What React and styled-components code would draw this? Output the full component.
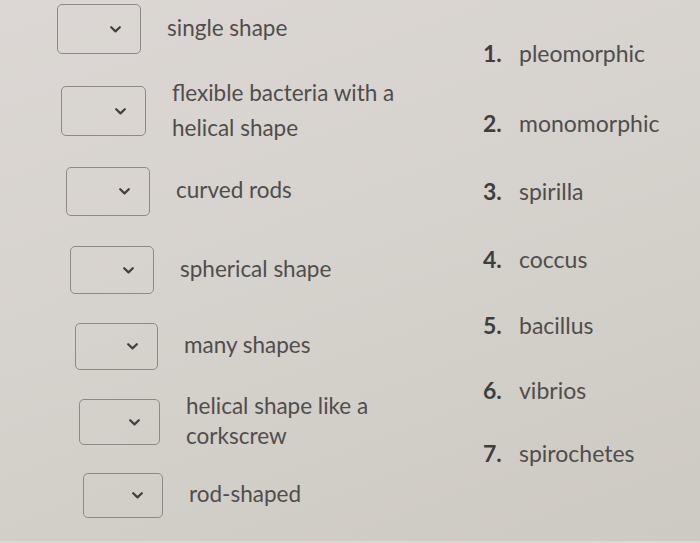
import React from 'react'
import styled, { createGlobalStyle } from 'styled-components'

const GlobalStyle = createGlobalStyle`
  html, body {
    margin: 0;
    padding: 0;
  }
  body {
    font-family: Lato, "Open Sans", sans-serif;
  }
`

const Page = styled.div`
  width: 700px;
  height: 543px;
  overflow: hidden;
  display: grid;
  grid-template-columns: 483px 1fr;
  background: linear-gradient(160deg, #dcd7d4 0%, #d6d2cd 45%, #cdcac2 100%);
  border-bottom: 2px solid #dad8d1;
  box-sizing: border-box;
`

const LeftCol = styled.div`
  display: flex;
  flex-direction: column;
`

const Row = styled.div`
  display: flex;
  align-items: center;
  height: ${(p) => p.h}px;
  margin-top: ${(p) => p.top}px;
  padding-left: ${(p) => p.left}px;
`

const SelectBox = styled.div`
  flex: none;
  width: ${(p) => p.w}px;
  height: ${(p) => p.h}px;
  box-sizing: border-box;
  border: 1.5px solid #8d8986;
  border-radius: 5px;
  display: flex;
  align-items: center;
  justify-content: flex-end;
  padding-right: 19px;
  color: #434140;
`

const Label = styled.div`
  margin-left: 26px;
  margin-top: -3px;
  font-size: 22.5px;
  line-height: ${(p) => p.lh || 30}px;
  color: #504d4b;
  white-space: pre-line;
`

const Options = styled.ol`
  list-style: none;
  margin: 0;
  padding: 0;
  display: flex;
  flex-direction: column;
`

const Option = styled.li`
  display: flex;
  align-items: center;
  height: 28px;
  margin-top: ${(p) => p.top}px;
  font-size: 23px;
  color: #504d4b;
`

const Num = styled.span`
  width: 36px;
  flex: none;
  font-weight: 700;
  color: #403e3d;
`

const Chevron = () => (
  <svg width="11" height="7" viewBox="0 0 11 7" fill="none">
    <path d="M1.2 1.2 L5.5 5.4 L9.8 1.2" stroke="currentColor" strokeWidth="2.2" strokeLinecap="round" strokeLinejoin="round" />
  </svg>
)

const rows = [
  { text: 'single shape', top: 4, left: 57, w: 84, h: 50 },
  { text: 'flexible bacteria with a\nhelical shape', top: 32, left: 61, w: 85, h: 50, lh: 35 },
  { text: 'curved rods', top: 31, left: 66, w: 84, h: 49 },
  { text: 'spherical shape', top: 30, left: 70, w: 84, h: 48 },
  { text: 'many shapes', top: 29, left: 75, w: 83, h: 47 },
  { text: 'helical shape like a\ncorkscrew', top: 29, left: 79, w: 81, h: 46, lh: 30 },
  { text: 'rod-shaped', top: 28, left: 83, w: 80, h: 45 },
]

const options = [
  { text: 'pleomorphic', top: 39 },
  { text: 'monomorphic', top: 42 },
  { text: 'spirilla', top: 40 },
  { text: 'coccus', top: 40 },
  { text: 'bacillus', top: 38 },
  { text: 'vibrios', top: 37 },
  { text: 'spirochetes', top: 35 },
]

export default function App() {
  return (
    <>
      <GlobalStyle />
      <Page>
        <LeftCol>
          {rows.map((r) => (
            <Row key={r.text} h={r.h} top={r.top} left={r.left}>
              <SelectBox w={r.w} h={r.h}>
                <Chevron />
              </SelectBox>
              <Label lh={r.lh}>{r.text}</Label>
            </Row>
          ))}
        </LeftCol>
        <Options>
          {options.map((o, i) => (
            <Option key={o.text} top={o.top}>
              <Num>{i + 1}.</Num>
              {o.text}
            </Option>
          ))}
        </Options>
      </Page>
    </>
  )
}
